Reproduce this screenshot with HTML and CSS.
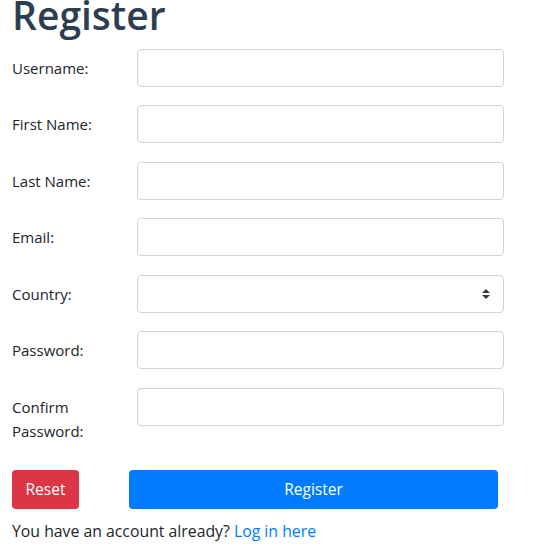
FILE: index.html
```html
<!DOCTYPE html>
<html>
<head>
<meta charset="utf-8">
<link rel="stylesheet" href="styles.css">
</head>
<body>
<div class="page">
  <h1 class="title">Register</h1>
  <form class="form">
    <div class="row">
      <label class="label">Username:</label>
      <input class="field" type="text">
    </div>
    <div class="row">
      <label class="label">First Name:</label>
      <input class="field" type="text">
    </div>
    <div class="row">
      <label class="label">Last Name:</label>
      <input class="field" type="text">
    </div>
    <div class="row">
      <label class="label">Email:</label>
      <input class="field" type="text">
    </div>
    <div class="row">
      <label class="label">Country:</label>
      <div class="select-wrap">
        <select class="field select"><option></option></select>
        <svg class="select-arrow" width="8" height="10" viewBox="0 0 8 10"><path d="M4 0 L8 4 H0 Z M0 6 H8 L4 10 Z" fill="#343a40"/></svg>
      </div>
    </div>
    <div class="row">
      <label class="label">Password:</label>
      <input class="field" type="password">
    </div>
    <div class="row">
      <label class="label">Confirm Password:</label>
      <input class="field" type="password">
    </div>
    <div class="buttons">
      <button type="button" class="btn btn-reset">Reset</button>
      <button type="button" class="btn btn-register">Register</button>
    </div>
    <p class="footer">You have an account already? <a class="link" href="#">Log in here</a></p>
  </form>
</div>
</body>
</html>
```

FILE: styles.css
```css
* { box-sizing: border-box; }
body {
  margin: 0;
  font-family: "Open Sans", "Noto Sans", sans-serif;
  font-size: 15px;
  color: #212529;
  background: #fff;
}
.page {
  padding: 0 12px;
}
.title {
  margin: -8px 0 0 0;
  font-size: 39px;
  font-weight: 600;
  line-height: 1.2;
  color: #2c3e50;
}
.form {
  margin-top: 10px;
}
.row {
  display: flex;
  align-items: flex-start;
  margin-bottom: 18.5px;
}
.label {
  width: 125px;
  padding: 7px 0;
  line-height: 24px;
  padding-right: 40px;
}
.field {
  width: 367px;
  height: 38px;
  border: 1px solid #ced4da;
  border-radius: 4px;
  background: #fff;
  font: inherit;
  padding: 6px 12px;
}
.select-wrap {
  position: relative;
  width: 367px;
}
.select {
  appearance: none;
  -webkit-appearance: none;
  display: block;
}
.select-arrow {
  position: absolute;
  right: 14px;
  top: 14px;
}
.buttons {
  display: flex;
  gap: 50px;
  margin-top: 20px;
}
.btn {
  height: 39px;
  border: 1px solid transparent;
  border-radius: 4px;
  font: inherit;
  font-size: 15.5px;
  color: #fff;
  padding: 0 12px;
  cursor: pointer;
}
.btn-reset {
  width: 67px;
  background: #dc3545;
}
.btn-register {
  width: 369px;
  background: #007bff;
}
.footer {
  margin: 10px 0 0 0;
  line-height: 24px;
  font-size: 15.8px;
}
.link {
  color: #007bff;
  text-decoration: none;
}
```
